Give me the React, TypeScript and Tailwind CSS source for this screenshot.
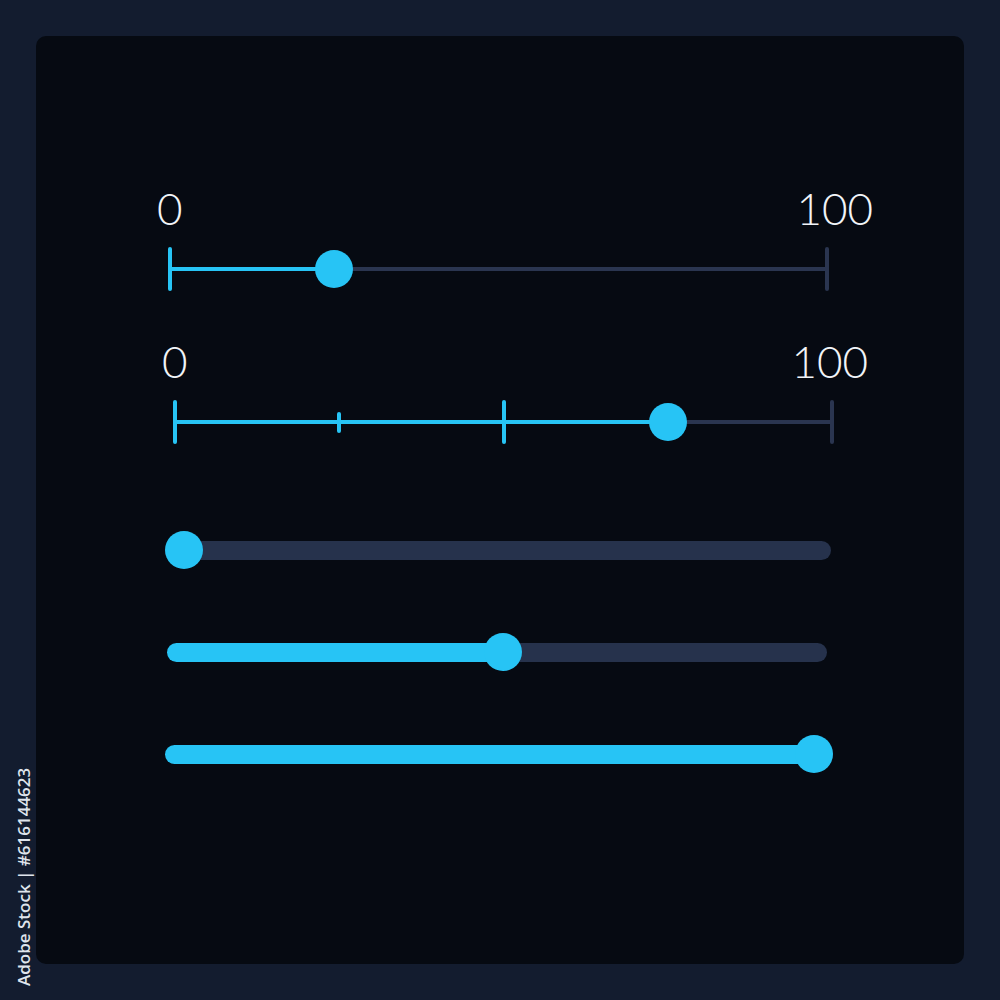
import { Fragment } from 'react';

type Stop = { at: number; kind: 'tick' | 'short' | 'thumb' };

// thin rail: ticks and thumb sit in a row, segments between them grow by their share
function LineSlider({
  value,
  ticks,
  labelPad,
  className,
}: {
  value: number;
  ticks: Stop[];
  labelPad: string;
  className: string;
}) {
  const stops = [...ticks, { at: value, kind: 'thumb' as const }].sort((a, b) => a.at - b.at);
  return (
    <div className={`w-[657px] flex flex-col gap-[17px] ${className}`}>
      <div
        className={`flex justify-between h-[44px] text-[44px] leading-[44px] font-light text-[#f1f4f8] ${labelPad}`}
        style={{ fontFamily: 'Lato, "Open Sans", sans-serif' }}
      >
        <span>0</span>
        <span>100</span>
      </div>
      <div className="flex items-center h-[44px]">
        {stops.map((s, i) => {
          const prev = i > 0 ? stops[i - 1].at : 0;
          const on = s.at <= value;
          return (
            <Fragment key={i}>
              {i > 0 && (
                <div
                  className={`h-[4px] basis-0 ${on ? 'bg-[#27c4f5]' : 'bg-[#2a3550]'}`}
                  style={{ flexGrow: s.at - prev }}
                />
              )}
              {s.kind === 'thumb' ? (
                <div className="relative z-10 shrink-0 w-[38px] h-[38px] -mx-[19px] rounded-full bg-[#27c4f5]" />
              ) : (
                <div
                  className={`shrink-0 w-[4px] -mx-[2px] rounded-sm ${s.kind === 'short' ? 'h-[21px]' : 'h-[44px]'} ${
                    on ? 'bg-[#27c4f5]' : 'bg-[#2a3550]'
                  }`}
                />
              )}
            </Fragment>
          );
        })}
      </div>
    </div>
  );
}

// thick rounded rail, thumb kept inside the ends
function BarSlider({ value, className }: { value: number; className: string }) {
  return (
    <div className={`flex items-center h-[38px] ${className}`}>
      <div
        className={`h-[19px] basis-[19px] rounded-l-full ${value > 0 ? 'bg-[#27c4f5]' : 'bg-[#26324c]'}`}
        style={{ flexGrow: value }}
      />
      <div className="relative z-10 shrink-0 w-[38px] h-[38px] -mx-[19px] rounded-full bg-[#27c4f5]" />
      <div className="h-[19px] basis-[19px] rounded-r-full bg-[#26324c]" style={{ flexGrow: 100 - value }} />
    </div>
  );
}

export default function App() {
  return (
    <div className="relative w-[1000px] h-[1000px] bg-[#131c2f] p-[36px]">
      <div className="h-full rounded-[10px] bg-[#060a12] flex flex-col pt-[150px] pl-[129px]">
        <LineSlider
          value={25}
          ticks={[{ at: 0, kind: 'tick' }, { at: 100, kind: 'tick' }]}
          labelPad="-ml-[13px] -mr-[46px]"
          className="ml-[5px]"
        />
        <LineSlider
          value={75}
          ticks={[
            { at: 0, kind: 'tick' },
            { at: 25, kind: 'short' },
            { at: 50, kind: 'tick' },
            { at: 100, kind: 'tick' },
          ]}
          labelPad="-ml-[13px] -mr-[36px]"
          className="ml-[10px] mt-[48px]"
        />
        <div className="flex flex-col gap-[64px] mt-[87px]">
          <BarSlider value={0} className="w-[666px]" />
          <BarSlider value={51} className="w-[660px] ml-[2px]" />
          <BarSlider value={100} className="w-[668px]" />
        </div>
      </div>
      <div
        className="absolute left-[13px] top-[986px] -rotate-90 origin-top-left whitespace-nowrap text-[17px] leading-[22px] font-semibold text-[#dfe4ec]"
        style={{ fontFamily: '"Open Sans", sans-serif' }}
      >
        Adobe Stock | #616144623
      </div>
    </div>
  );
}
